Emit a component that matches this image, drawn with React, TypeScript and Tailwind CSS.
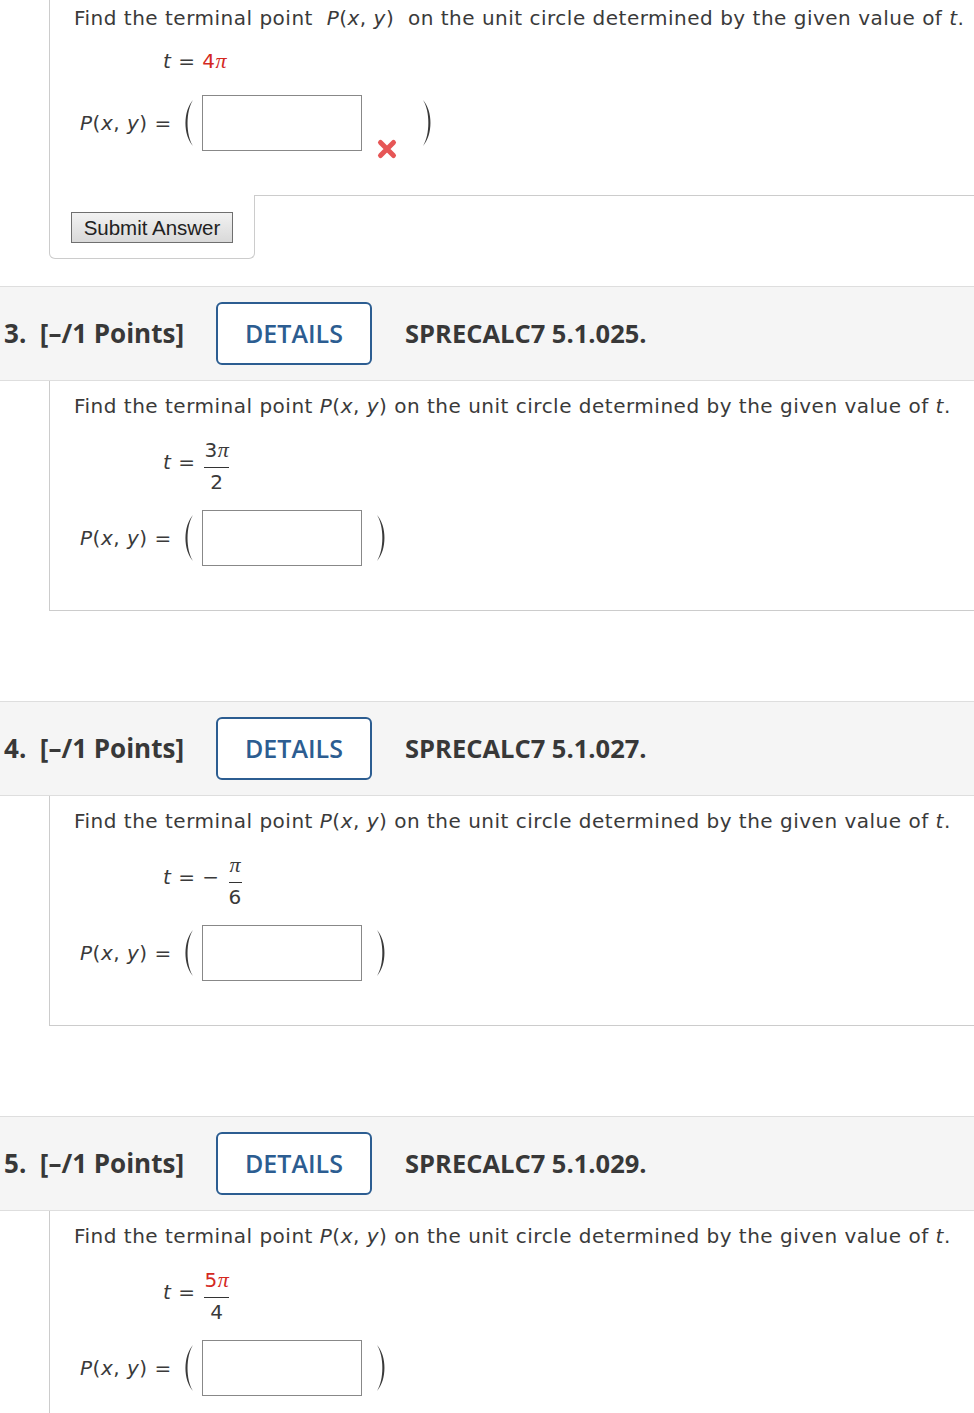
import type { ReactNode } from "react";

function Paren({ side }: { side: "l" | "r" }) {
  return (
    <svg width="13" height="48" viewBox="0 0 13 48" className="shrink-0" aria-hidden="true">
      {side === "l" ? (
        <path d="M11 1 C1 12 1 36 11 47 C3.8 36 3.8 12 11 1 Z" fill="#3a3a3a" />
      ) : (
        <path d="M2 1 C12 12 12 36 2 47 C9.2 36 9.2 12 2 1 Z" fill="#3a3a3a" />
      )}
    </svg>
  );
}

function Pi() {
  return <span className="font-['Liberation_Serif'] text-[22px] italic leading-none">π</span>;
}

function Fraction({ top, bottom }: { top: ReactNode; bottom: ReactNode }) {
  return (
    <span className="inline-flex flex-col items-center px-[8px]">
      <span className="pb-[5px] leading-[24px]">{top}</span>
      <span className="w-full border-t border-[#333]" />
      <span className="pt-[2px] leading-[24px]">{bottom}</span>
    </span>
  );
}

function AnswerRow({ wrong }: { wrong?: boolean }) {
  return (
    <div className="ml-[6px] flex items-center">
      <span className="w-[102px] shrink-0 whitespace-nowrap">
        <i>P</i>(<i>x</i>, <i>y</i>) =
      </span>
      <Paren side="l" />
      <span className="ml-[7px] h-[56px] w-[160px] shrink-0 border border-[#888] bg-white" />
      {wrong ? (
        <>
          <svg width="24" height="24" viewBox="0 0 24 24" className="relative top-[26px] ml-[13px]" aria-hidden="true">
            <path d="M5.5 5.5 L18.5 18.5 M18.5 5.5 L5.5 18.5" stroke="#e65656" strokeWidth="5" strokeLinecap="round" />
          </svg>
          <span className="ml-[22px]">
            <Paren side="r" />
          </span>
        </>
      ) : (
        <span className="ml-[13px]">
          <Paren side="r" />
        </span>
      )}
    </div>
  );
}

function Prompt({ spaced }: { spaced?: boolean }) {
  return (
    <p className="leading-[24px]">
      Find the terminal point{spaced ? "\u00a0 " : " "}
      <i>P</i>(<i>x</i>, <i>y</i>){spaced ? "\u00a0 " : " "}on the unit circle determined by the given value of <i>t</i>.
    </p>
  );
}

function Header({ num, code }: { num: number; code: string }) {
  return (
    <div className="flex h-[95px] items-center border-y border-[#dedede] bg-[#f5f5f5] font-['Open_Sans'] font-bold tracking-normal text-[#383838]">
      <span className="ml-[4px] w-[212px] text-[26px]">
        {num}.&nbsp; [–/1 Points]
      </span>
      <button
        type="button"
        className="flex h-[63px] w-[156px] items-center justify-center rounded-[6px] border-2 border-[#2c5d91] bg-white text-[25px] font-semibold text-[#2c5d91]"
      >
        DETAILS
      </button>
      <span className="ml-[33px] text-[25.5px]">{code}</span>
    </div>
  );
}

function Question({ t }: { t: ReactNode }) {
  return (
    <div className="ml-[49px] border-b border-l border-[#cccccc] pb-[44px] pl-[24px] pt-[13px]">
      <Prompt />
      <div className="ml-[89px] mt-[20px] flex items-center">{t}</div>
      <div className="mt-[16px]">
        <AnswerRow />
      </div>
    </div>
  );
}

export default function App() {
  return (
    <main className="min-h-[1413px] w-[974px] overflow-hidden bg-white font-['DejaVu_Sans'] text-[20px] tracking-[0.5px] text-[#3a3a3a]">
      <section>
        <div className="ml-[49px] border-l border-[#cccccc] pb-[44px] pl-[24px] pt-[6px]">
          <Prompt spaced />
          <div className="ml-[89px] mt-[19px] h-[24px] leading-[24px]">
            <i>t</i> = <span className="text-[#d4291f]">4<Pi /></span>
          </div>
          <div className="mt-[22px]">
            <AnswerRow wrong />
          </div>
        </div>
        <div className="flex">
          <div className="ml-[49px] flex h-[64px] w-[206px] items-start rounded-b-[6px] border-x border-b border-[#cccccc] pl-[21px] pt-[17px]">
            <button
              type="button"
              className="h-[31px] w-[162px] border border-[#6f6f6f] bg-gradient-to-b from-[#f2f2f2] to-[#d9d9d9] font-['Liberation_Sans'] text-[20.5px] tracking-normal text-[#222]"
            >
              Submit Answer
            </button>
          </div>
          <div className="flex-1 border-t border-[#cccccc]" />
        </div>
      </section>

      <div className="mt-[27px]">
        <Header num={3} code="SPRECALC7 5.1.025." />
        <Question
          t={
            <>
              <span className="relative -top-[4px] mr-[1px]">
                <i>t</i> =
              </span>
              <Fraction top={<>3<Pi /></>} bottom="2" />
            </>
          }
        />
      </div>

      <div className="mt-[90px]">
        <Header num={4} code="SPRECALC7 5.1.027." />
        <Question
          t={
            <>
              <span className="relative -top-[4px] mr-[1px]">
                <i>t</i> = −
              </span>
              <Fraction top={<Pi />} bottom="6" />
            </>
          }
        />
      </div>

      <div className="mt-[90px]">
        <Header num={5} code="SPRECALC7 5.1.029." />
        <Question
          t={
            <>
              <span className="relative -top-[4px] mr-[1px]">
                <i>t</i> =
              </span>
              <Fraction top={<span className="text-[#d4291f]">5<Pi /></span>} bottom="4" />
            </>
          }
        />
      </div>
    </main>
  );
}
